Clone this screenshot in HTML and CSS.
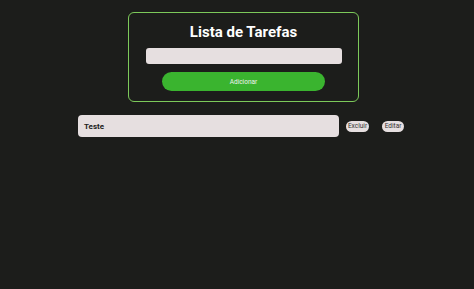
FILE: index.html
```html
<!DOCTYPE html>
<html lang="pt">
<head>
<meta charset="utf-8">
<title>Lista de Tarefas</title>
<link rel="stylesheet" href="styles.css">
</head>
<body>
<div class="app">
  <div class="card">
    <h1 class="title">Lista de Tarefas</h1>
    <input class="task-input" type="text">
    <button class="add-btn">Adicionar</button>
  </div>
</div>
<ul class="list">
  <li class="row">
    <span class="item">Teste</span>
    <button class="small-btn del">Excluir</button>
    <button class="small-btn edit">Editar</button>
  </li>
</ul>
</body>
</html>
```
FILE: styles.css
```css
* { box-sizing: border-box; }
html, body {
  margin: 0;
  padding: 0;
  background: #1c1d1b;
  font-family: Roboto, "Liberation Sans", sans-serif;
  height: 100%;
}
.app {
  display: flex;
  flex-direction: column;
  align-items: center;
  padding-left: 13px;
  padding-top: 12px;
}
.card {
  width: 231px;
  height: 90px;
  border: 1.5px solid #7cc95a;
  border-radius: 6px;
  padding-top: 8px;
  display: flex;
  flex-direction: column;
  align-items: center;
}
.title {
  margin: 0 0 5px 0;
  font-size: 15px;
  line-height: 22px;
  font-weight: 700;
  color: #ffffff;
}
.task-input {
  width: 196px;
  height: 16px;
  border: none;
  border-radius: 3px;
  background: #e6dfe0;
  margin: 0 0 8px 0;
  padding: 0;
}
.add-btn {
  width: 163px;
  height: 19px;
  border: none;
  border-radius: 10px;
  background: #3ab42f;
  color: #f2f2f2;
  font-family: Roboto, "Liberation Sans", sans-serif;
  font-size: 6.5px;
  padding: 0;
}
.list {
  list-style: none;
  margin: 13px 0 0 78px;
  padding: 0;
}
.row {
  display: flex;
  align-items: center;
}
.item {
  width: 261px;
  height: 22px;
  background: #e6dfe0;
  border-radius: 4px;
  padding-left: 6px;
  display: flex;
  align-items: center;
  font-size: 8px;
  font-weight: 700;
  color: #222222;
}
.small-btn {
  height: 11px;
  border: none;
  border-radius: 6px;
  background: #e6dfe0;
  color: #333333;
  font-family: Roboto, "Liberation Sans", sans-serif;
  font-size: 6.5px;
  padding: 0;
  text-align: center;
  line-height: 11px;
}
.del { margin-left: 7px; width: 23px; }
.edit { margin-left: 13px; width: 22px; }
```
